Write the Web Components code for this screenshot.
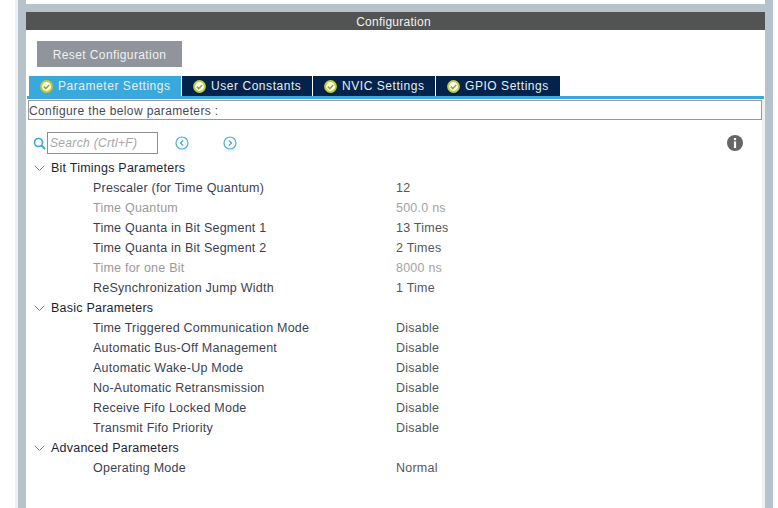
<!DOCTYPE html>
<html><head><meta charset="utf-8"><style>
html,body{margin:0;padding:0;background:#fff;overflow:hidden}
body{width:778px;height:508px;font-family:"Liberation Sans",Arial,sans-serif}
</style></head><body>
<config-page>
  <param-group title="Bit Timings Parameters">
    <param-row name="Prescaler (for Time Quantum)" value="12"></param-row>
    <param-row name="Time Quantum" value="500.0 ns" muted></param-row>
    <param-row name="Time Quanta in Bit Segment 1" value="13 Times"></param-row>
    <param-row name="Time Quanta in Bit Segment 2" value="2 Times"></param-row>
    <param-row name="Time for one Bit" value="8000 ns" muted></param-row>
    <param-row name="ReSynchronization Jump Width" value="1 Time"></param-row>
  </param-group>
  <param-group title="Basic Parameters">
    <param-row name="Time Triggered Communication Mode" value="Disable"></param-row>
    <param-row name="Automatic Bus-Off Management" value="Disable"></param-row>
    <param-row name="Automatic Wake-Up Mode" value="Disable"></param-row>
    <param-row name="No-Automatic Retransmission" value="Disable"></param-row>
    <param-row name="Receive Fifo Locked Mode" value="Disable"></param-row>
    <param-row name="Transmit Fifo Priority" value="Disable"></param-row>
  </param-group>
  <param-group title="Advanced Parameters">
    <param-row name="Operating Mode" value="Normal"></param-row>
  </param-group>
</config-page>
<script>
const mk=(name,html)=>customElements.define(name,class extends HTMLElement{
  constructor(){super();this.attachShadow({mode:'open'})}
  connectedCallback(){this.shadowRoot.innerHTML=typeof html==='function'?html(this):html}
});
const check=`<svg width="13" height="13" viewBox="0 0 13 13"><circle cx="6.5" cy="6.5" r="5.4" fill="#fff" stroke="#c3cf2e" stroke-width="2"/><path d="M3.8 6.6l2 2 3.4-3.6" fill="none" stroke="#9aa82a" stroke-width="1.6"/></svg>`;
mk('tab-item',el=>`<style>
:host{display:flex;align-items:center;height:20px;box-sizing:border-box;background:${el.hasAttribute('active')?'#39a9dc':'#03234b'};color:#e8edf2;font-size:12px;letter-spacing:.55px;padding-left:${el.getAttribute('pl')};width:${el.getAttribute('w')}px;gap:5px;border-right:1px solid #fff;white-space:nowrap}
svg{flex:none}
</style>${check}<span>${el.getAttribute('label')}</span>`);
mk('param-row',el=>`<style>
:host{display:flex;height:20px;align-items:center;font-size:12.5px;color:${el.hasAttribute('muted')?'#9a9a9a':'#3c3f52'};white-space:nowrap;letter-spacing:.23px}
.n{width:303px;margin-left:67px}
.v{color:${el.hasAttribute('muted')?'#a4a4a4':'#54565a'}}
</style><span class="n">${el.getAttribute('name')}</span><span class="v">${el.getAttribute('value')}</span>`);
mk('param-group',el=>`<style>
:host{display:block}
.h{display:flex;align-items:center;height:20px;font-size:12.5px;color:#1d1f33;letter-spacing:.23px;white-space:nowrap}
svg{margin:0 6px 0 8px;flex:none}
</style><div class="h"><svg width="11" height="7" viewBox="0 0 11 7"><path d="M.7.7l4.8 4.8L10.300.7" fill="none" stroke="#7c7f82" stroke-width="1"/></svg><span>${el.getAttribute('title')}</span></div><slot></slot>`);
mk('config-page',`<style>
:host{display:block;width:778px;height:508px;box-sizing:border-box;padding-left:15px;padding-right:5px;background:#fff;color:#333}
.edge{display:flex;height:100%;background:#eef1f3;padding-left:3px}
.frame{flex:1;background:#b7c3ca;padding:0 8px;display:flex;flex-direction:column}
.top{height:4px;background:#fff;flex:none}
.gap{height:8px;flex:none}
.panel{flex:1;background:#fff;display:flex;flex-direction:column;position:relative}
.track{position:absolute;right:0;top:88px;bottom:0;width:3px;background:#f0f0f0}
.title{height:18px;box-sizing:border-box;padding:1px 4px 0 0;background:#525453;color:#f2f2f2;font-size:12px;letter-spacing:.25px;display:flex;align-items:center;justify-content:center;flex:none}
.btn{margin:11px 0 0 11px;width:145px;height:26px;box-sizing:border-box;padding-top:1px;background:#8f959b;color:#f0f0f0;font-size:12px;letter-spacing:.4px;display:flex;align-items:center;justify-content:center;flex:none}
.tabs{display:flex;margin:9px 0 0 3px;flex:none}
.rule{height:3px;background:#39a9dc;margin-left:1px;margin-right:1px;flex:none}
.cfg{margin:1px 3px 0 2px;height:20px;box-sizing:border-box;border:1px solid #999;font-size:12px;color:#46495c;letter-spacing:.38px;line-height:20px;padding-left:0;flex:none;white-space:nowrap}
.bar{display:flex;align-items:center;height:22px;margin-top:12px;flex:none}
.sico{margin-left:7px;flex:none}
.search{margin-left:1px;width:111px;height:22px;box-sizing:border-box;border:1px solid #8f8f8f;font-size:12px;font-style:italic;color:#a6a6a6;letter-spacing:.33px;line-height:20px;padding-left:2px;white-space:nowrap}
.nav1{margin-left:17px}.nav2{margin-left:34px}
.info{margin-left:auto;margin-right:22px}
.tree{margin-top:4px}
</style>
<div class="edge"><div class="frame">
<div class="top"></div><div class="gap"></div>
<div class="panel">
<div class="track"></div>
<div class="title">Configuration</div>
<div class="btn">Reset Configuration</div>
<div class="tabs">
<tab-item active label="Parameter Settings" w="153" pl="11px"></tab-item>
<tab-item label="User Constants" w="131" pl="11px"></tab-item>
<tab-item label="NVIC Settings" w="123" pl="11px"></tab-item>
<tab-item label="GPIO Settings" w="125" pl="11px"></tab-item>
</div>
<div class="rule"></div>
<div class="cfg">Configure the below parameters :</div>
<div class="bar">
<svg class="sico" width="13" height="13" viewBox="0 0 13 13"><circle cx="5.500" cy="5.500" r="4" fill="none" stroke="#3aa5d8" stroke-width="1.600"/><path d="M8.500 8.500l3.500 3.500" stroke="#3aa5d8" stroke-width="1.800"/></svg>
<div class="search">Search (Crtl+F)</div>
<svg class="nav1" width="14" height="14" viewBox="0 0 14 14"><circle cx="7" cy="7" r="6" fill="none" stroke="#4eb0de" stroke-width="1.200"/><path d="M8.200 4.300L5.500 7l2.700 2.700" fill="none" stroke="#3d9fd0" stroke-width="1.200"/></svg>
<svg class="nav2" width="14" height="14" viewBox="0 0 14 14"><circle cx="7" cy="7" r="6" fill="none" stroke="#4eb0de" stroke-width="1.200"/><path d="M5.800 4.300L8.500 7l-2.700 2.700" fill="none" stroke="#3d9fd0" stroke-width="1.200"/></svg>
<svg class="info" width="16" height="16" viewBox="0 0 16 16"><circle cx="8" cy="8" r="8" fill="#666"/><rect x="6.900" y="3" width="2.200" height="2.200" fill="#fff"/><rect x="6.900" y="6.500" width="2.200" height="6.500" fill="#fff"/></svg>
</div>
<div class="tree"><slot></slot></div>
</div>
</div></div>`);
</script>
</body></html>
